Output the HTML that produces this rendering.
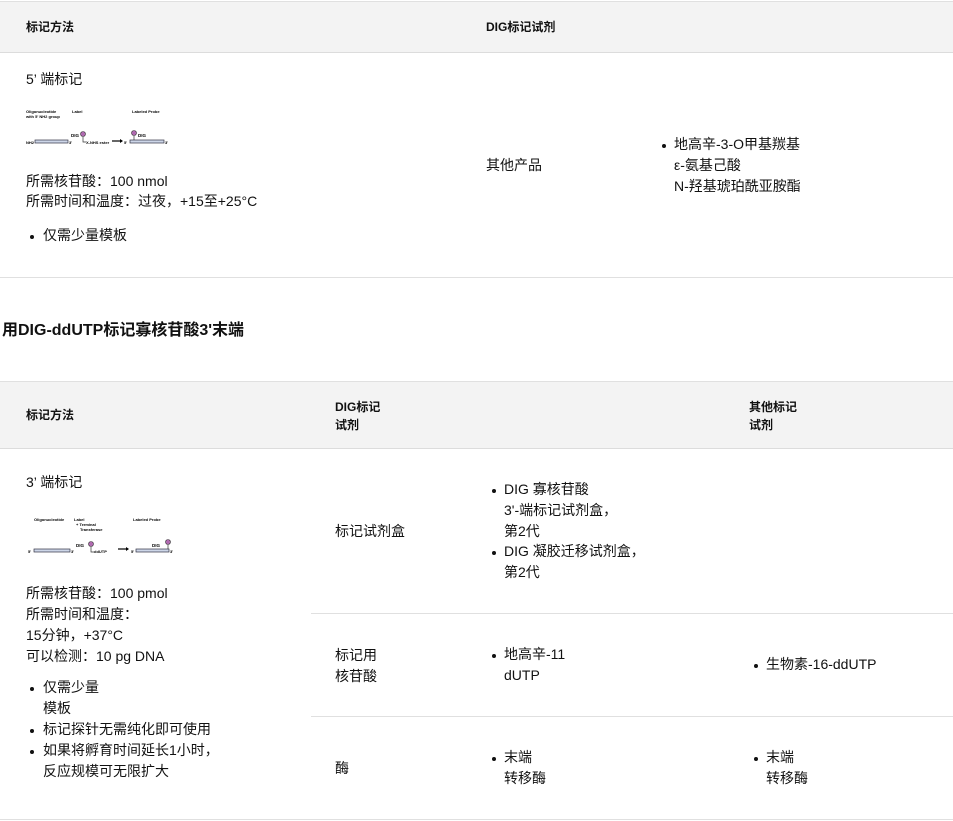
<!DOCTYPE html><html><head><meta charset="utf-8"><style>
body{margin:0;width:953px;height:821px;position:relative;background:#fff;font-family:"Liberation Sans","Noto Sans CJK SC",sans-serif;color:#111;font-size:14px;overflow:hidden}
.a{position:absolute;line-height:21px;white-space:nowrap}
.h{font-weight:bold;font-size:12px;line-height:18px}
.band{position:absolute;left:0;width:953px;background:#f3f3f3;border-top:1px solid #e0e0e0;border-bottom:1px solid #dcdcdc}
.ln{position:absolute;height:1px;background:#e0e0e0}
.b{position:absolute;width:4px;height:4px;border-radius:50%;background:#111}
svg text{font-family:"Liberation Sans",sans-serif;font-weight:bold}
</style></head><body>
<div class="band" style="top:1px;height:50px"></div>
<div class="a h" style="left:26px;top:18px">标记方法</div>
<div class="a h" style="left:486px;top:18px">DIG标记试剂</div>
<div class="a" style="left:26px;top:69px">5’ 端标记</div>
<svg style="position:absolute;left:24px;top:106px" width="150" height="42">
<text x="2" y="7" font-size="4">Oligonucleotide</text><text x="2" y="12" font-size="4">with 5' NH2 group</text>
<text x="48" y="7" font-size="4">Label</text><text x="108" y="7" font-size="4">Labeled Probe</text>
<text x="2" y="38" font-size="4">NH2</text><rect x="11" y="34" width="33" height="3" fill="#cdd6e8" stroke="#334" stroke-width="0.7"/><text x="45" y="38" font-size="4">3'</text>
<text x="47" y="31" font-size="4.5">DIG</text><circle cx="59" cy="28" r="2.5" fill="#b06ab0" stroke="#333" stroke-width=".6"/><path d="M59 31V36H62" stroke="#333" fill="none" stroke-width=".7"/><text x="62" y="38" font-size="4">X-NHS ester</text>
<path d="M88 35H96" stroke="#000" stroke-width="1.2"/><path d="M96 33L99 35L96 37Z"/>
<text x="100" y="38" font-size="4">5'</text><rect x="106" y="34" width="34" height="3" fill="#cdd6e8" stroke="#334" stroke-width="0.7"/><text x="141" y="38" font-size="4">3'</text>
<circle cx="110" cy="27" r="2.5" fill="#b06ab0" stroke="#333" stroke-width=".6"/><path d="M110 30V34" stroke="#333" stroke-width=".7"/><text x="114" y="31" font-size="4.5">DIG</text>
</svg>
<div class="a" style="left:26px;top:171px">所需核苷酸：100 nmol</div>
<div class="a" style="left:26px;top:191px">所需时间和温度：过夜，+15至+25°C</div>
<div class="b" style="left:30px;top:235px"></div><div class="a" style="left:43px;top:225px">仅需少量模板</div>
<div class="a" style="left:486px;top:155px">其他产品</div>
<div class="b" style="left:662px;top:144px"></div>
<div class="a" style="left:674px;top:134px">地高辛-3-O甲基羰基<br>ε-氨基己酸<br>N-羟基琥珀酰亚胺酯</div>
<div class="ln" style="left:0;top:277px;width:953px"></div>
<div class="a" style="left:2px;top:320px;font-weight:bold;font-size:16px">用DIG-ddUTP标记寡核苷酸3'末端</div>
<div class="band" style="top:381px;height:66px"></div>
<div class="a h" style="left:26px;top:406px">标记方法</div>
<div class="a h" style="left:335px;top:398px">DIG标记<br>试剂</div>
<div class="a h" style="left:749px;top:398px">其他标记<br>试剂</div>
<div class="a" style="left:26px;top:472px">3’ 端标记</div>
<svg style="position:absolute;left:24px;top:512px" width="152" height="46">
<text x="10" y="9" font-size="4">Oligonucleotide</text><text x="50" y="9" font-size="4">Label</text><text x="52" y="14" font-size="4">+ Terminal</text><text x="56" y="19" font-size="4">Transferase</text><text x="109" y="9" font-size="4">Labeled Probe</text>
<text x="4" y="41" font-size="4">5'</text><rect x="10" y="37" width="36" height="3" fill="#cdd6e8" stroke="#334" stroke-width="0.7"/><text x="47" y="41" font-size="4">3'</text>
<text x="52" y="35" font-size="4.5">DIG</text><circle cx="67" cy="32" r="2.5" fill="#b06ab0" stroke="#333" stroke-width=".6"/><path d="M67 35V40H70" stroke="#333" fill="none" stroke-width=".7"/><text x="70" y="41" font-size="4">ddUTP</text>
<path d="M94 37H102" stroke="#000" stroke-width="1.2"/><path d="M102 35L105 37L102 39Z"/>
<text x="107" y="41" font-size="4">5'</text><rect x="112" y="37" width="33" height="3" fill="#cdd6e8" stroke="#334" stroke-width="0.7"/><text x="146" y="41" font-size="4">3'</text>
<text x="128" y="35" font-size="4.5">DIG</text><circle cx="144" cy="30" r="2.5" fill="#b06ab0" stroke="#333" stroke-width=".6"/><path d="M144 33V37" stroke="#333" stroke-width=".7"/>
</svg>
<div class="a" style="left:26px;top:583px">所需核苷酸：100 pmol<br>所需时间和温度：<br>15分钟，+37°C<br>可以检测：10 pg DNA</div>
<div class="b" style="left:30px;top:687px"></div><div class="a" style="left:43px;top:677px">仅需少量<br>模板</div>
<div class="b" style="left:30px;top:729px"></div><div class="a" style="left:43px;top:719px">标记探针无需纯化即可使用</div>
<div class="b" style="left:30px;top:750px"></div><div class="a" style="left:43px;top:740px">如果将孵育时间延长1小时，<br>反应规模可无限扩大</div>
<div class="a" style="left:335px;top:521px">标记试剂盒</div>
<div class="b" style="left:492px;top:489px"></div><div class="a" style="left:504px;top:479px">DIG 寡核苷酸<br>3'-端标记试剂盒，<br>第2代</div>
<div class="b" style="left:492px;top:551px"></div><div class="a" style="left:504px;top:541px">DIG 凝胶迁移试剂盒，<br>第2代</div>
<div class="ln" style="left:311px;top:613px;width:642px"></div>
<div class="a" style="left:335px;top:645px">标记用<br>核苷酸</div>
<div class="b" style="left:492px;top:654px"></div><div class="a" style="left:504px;top:644px">地高辛-11<br>dUTP</div>
<div class="b" style="left:754px;top:664px"></div><div class="a" style="left:766px;top:654px">生物素-16-ddUTP</div>
<div class="ln" style="left:311px;top:716px;width:642px"></div>
<div class="a" style="left:335px;top:758px">酶</div>
<div class="b" style="left:492px;top:757px"></div><div class="a" style="left:504px;top:747px">末端<br>转移酶</div>
<div class="b" style="left:754px;top:757px"></div><div class="a" style="left:766px;top:747px">末端<br>转移酶</div>
<div class="ln" style="left:0;top:819px;width:953px"></div>
</body></html>
